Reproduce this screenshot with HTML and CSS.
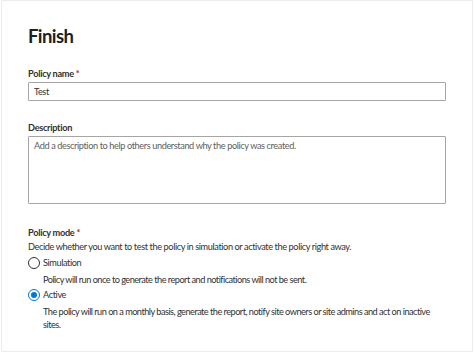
FILE: index.html
```html
<!DOCTYPE html>
<html>
<head>
<meta charset="utf-8">
<link rel="stylesheet" href="styles.css">
</head>
<body>
<div class="frame">
  <h1 class="title">Finish</h1>
  <div class="field">
    <label class="label">Policy name <span class="req">*</span></label>
    <div class="input">Test</div>
  </div>
  <div class="field desc">
    <label class="label">Description</label>
    <div class="textarea">Add a description to help others understand why the policy was created.</div>
  </div>
  <div class="field mode">
    <label class="label">Policy mode <span class="req">*</span></label>
    <div class="hint">Decide whether you want to test the policy in simulation or activate the policy right away.</div>
    <div class="option">
      <div class="row"><span class="radio"></span><span class="opt-label">Simulation</span></div>
      <div class="opt-desc">Policy will run once to generate the report and notifications will not be sent.</div>
    </div>
    <div class="option">
      <div class="row"><span class="radio checked"></span><span class="opt-label">Active</span></div>
      <div class="opt-desc">The policy will run on a monthly basis, generate the report, notify site owners or site admins and act on inactive sites.</div>
    </div>
  </div>
</div>
</body>
</html>
```
FILE: styles.css
```css
html, body { margin: 0; padding: 0; background: #fff; }
body { font-family: Lato, "Noto Sans", sans-serif; color: #323130; letter-spacing: -0.4px; }
.frame {
  width: 472px; height: 352px; box-sizing: border-box;
  border: 1px solid #ececec;
  margin: 0 0 0 1px;
  padding: 23px 26px 0 26px;
}
.title { margin: 0; font-size: 18.5px; font-weight: 700; line-height: 24px; color: #201f1e; letter-spacing: -0.6px; }
.field { margin-top: 19px; }
.label { display: block; font-size: 9.2px; line-height: 14px; font-weight: 700; color: #323130; letter-spacing: -0.3px; }
.req { color: #a4262c; }
.input {
  margin-top: 1px; height: 19px; box-sizing: border-box;
  border: 1px solid #a8a6a4; border-radius: 1px;
  padding: 0 5px; font-size: 9.2px; line-height: 17px; color: #323130;
}
.desc { margin-top: 20px; }
.textarea {
  margin-top: 1px; height: 68px; box-sizing: border-box;
  border: 1px solid #a8a6a4; border-radius: 1px;
  padding: 2px 5px; font-size: 9.2px; line-height: 14px; color: #605e5c;
}
.mode { margin-top: 22px; }
.hint { font-size: 9.2px; line-height: 13px; margin-top: 0; color: #323130; }
.option { margin-top: 3px; }
.option + .option { margin-top: 2px; }
.row { display: flex; align-items: center; gap: 3px; height: 14px; }
.radio {
  width: 12px; height: 12px; box-sizing: border-box; border-radius: 50%;
  border: 1px solid #323130; position: relative; flex: none;
}
.radio.checked { border-color: #0078d4; }
.radio.checked::after {
  content: ""; position: absolute; left: 2px; top: 2px; width: 6px; height: 6px;
  border-radius: 50%; background: #0078d4;
}
.opt-label { font-size: 9.2px; line-height: 14px; color: #323130; }
.opt-desc { margin: 3px 0 0 15px; font-size: 9.2px; line-height: 13px; color: #323130; letter-spacing: -0.52px; }
```
